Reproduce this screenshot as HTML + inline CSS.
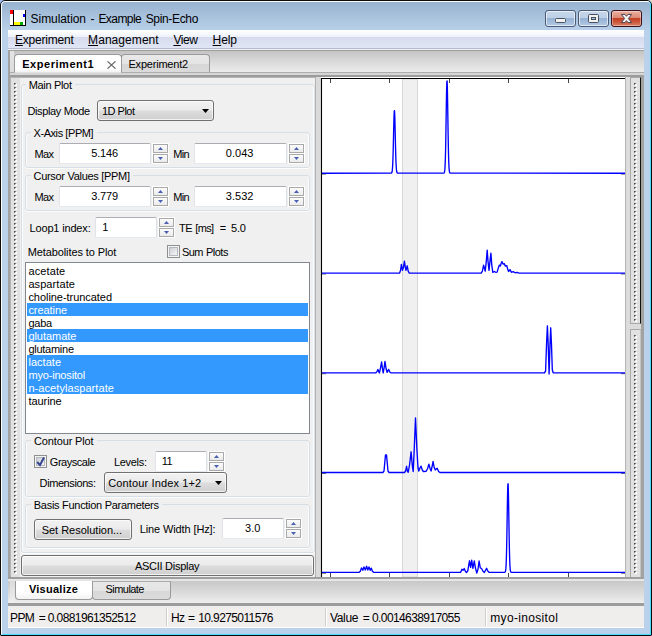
<!DOCTYPE html>
<html><head><meta charset="utf-8"><title>Simulation - Example Spin-Echo</title>
<style>
html,body{margin:0;padding:0;}
body{width:652px;height:636px;overflow:hidden;background:#fff;position:relative;font-family:"Liberation Sans",sans-serif;font-size:11px;}
div,span,svg{position:absolute;box-sizing:border-box;}
.t{white-space:nowrap;}
#win{left:0;top:0;width:652px;height:636px;border:1px solid #0c0c0c;border-radius:5px 5px 1px 1px;
 background:linear-gradient(180deg,#99b4d1 2px,#b9d1ea 30px);overflow:hidden;}
#inl{left:0;top:0;width:650px;height:634px;border:1px solid #fbfdff;border-right-color:#45dcff;border-bottom-color:#45dcff;border-radius:4px 4px 1px 1px;}
#fl{display:none;}
#frr{display:none;}
#client{left:8px;top:30px;width:636px;height:598px;background:#f0f0f0;}
#menubar{left:0;top:0;width:636px;height:20px;background:linear-gradient(180deg,#ffffff 0px,#f9fafd 3px,#eef1fa 7px,#d5daed 7px,#e1e6f6 18px,#b6bccf 18px,#b6bccf 19px,#f0f0f0 19px,#f0f0f0 20px);}
#tabbar{left:0;top:20px;width:636px;height:27px;background:linear-gradient(180deg,#a0a0a0 0px,#a0a0a0 1px,#c4c4c4 1px,#d6d6d6 10px,#ececec 22px,#adadad 22px,#adadad 23px,#d6d6d6 23px,#d6d6d6 25px,#9c9c9c 25px,#9c9c9c 27px);}
.cbn{top:10px;width:31px;height:17px;border:1px solid #4b5b75;border-radius:3px;background:linear-gradient(180deg,#c6d7eb 0px,#bdd0e7 7px,#97b1d3 7px,#9fb9d9 10px,#b3cae4 15px);box-shadow:inset 0 0 0 1px rgba(255,255,255,.62);}
.tab{border:1px solid #9a9a9a;border-bottom:none;border-radius:4px 4px 0 0;}
.gb{border:1px solid #d5dfe5;border-radius:3px;box-shadow:inset 1px 0 #fcfcfc,inset -1px 0 #fcfcfc,0 1px #fcfcfc;}
.tf{background:#fff;border:1px solid #abadb3;border-color:#abadb3 #dbdfe6 #e3e9ef #e2e3ea;border-radius:2px;}
.spw{background:#fff;}
.spb{border:1px solid #a9a9a9;background:linear-gradient(180deg,#fbfbfb,#ebebeb);}
.btn{border:1px solid #707070;border-radius:3px;background:linear-gradient(180deg,#f2f2f2 0%,#ebebeb 48%,#dddddd 52%,#cfcfcf 100%);box-shadow:inset 0 0 0 1px rgba(255,255,255,.7);}
.li{width:281px;height:13px;}
.lis{background:#3399ff;}
.cb{width:13px;height:13px;border:1px solid #8e8f8f;background:linear-gradient(135deg,#cdd1d6 20%,#f4f4f5 80%);box-shadow:inset 0 0 0 1px #f4f4f4,inset 0 0 0 2px #b4b9c0;}
</style></head><body>
<div style="left:0;top:0;width:5px;height:5px;background:#a3bff0;"></div><div style="left:647px;top:0;width:5px;height:5px;background:#d6d6d6;"></div>
<div id="win"><div id="inl"></div><div id="fl"></div><div id="frr"></div></div>

<svg style="left:10px;top:10px" width="16" height="16" viewBox="0 0 16 16" shape-rendering="crispEdges">
<rect x="0" y="0" width="16" height="16" fill="#fff"/>
<rect x="3" y="0" width="1" height="15" fill="#000"/><rect x="0" y="15" width="16" height="1" fill="#000"/><rect x="15" y="0" width="1" height="16" fill="#000"/>
<rect x="0" y="0" width="3" height="4" fill="#f00"/><rect x="13" y="4" width="2" height="3" fill="#00f"/>
<rect x="4" y="12" width="6" height="3" fill="#ff0"/><rect x="10" y="12" width="3" height="3" fill="#0a0"/></svg>
<span class="t" style="left:30.6px;top:12px;font-size:12px;line-height:14px;color:#000;letter-spacing:-0.067px;">Simulation</span><span class="t" style="left:90.5px;top:12px;font-size:12px;line-height:14px;color:#000;">-</span><span class="t" style="left:98.4px;top:12px;font-size:12px;line-height:14px;color:#000;letter-spacing:-0.548px;">Example</span><span class="t" style="left:145.7px;top:12px;font-size:12px;line-height:14px;color:#000;letter-spacing:-0.334px;">Spin-Echo</span>
<div class="cbn" style="left:545px;"></div><div class="cbn" style="left:578px;"></div>
<div class="cbn" style="left:611px;border-color:#3d0f18;background:linear-gradient(180deg,#ecb0a2 0px,#dc8a74 7px,#c23f25 7px,#c94f33 10px,#d97f63 15px);box-shadow:inset 0 0 0 1px rgba(255,255,255,.38);"></div>
<div style="left:555px;top:18px;width:11px;height:5px;background:#f1f1f1;border:1px solid #46505f;border-radius:1.5px;"></div>
<div style="left:588px;top:14px;width:11px;height:9px;background:#f1f1f1;border:1px solid #46505f;border-radius:1.5px;"></div>
<div style="left:591px;top:17px;width:5px;height:3px;background:#a9bfdb;border:1px solid #46505f;"></div>
<svg style="left:619px;top:12px" width="15" height="13" viewBox="0 0 15 13"><path d="M2.4,2.4 L6,2.4 L7.5,4.3 L9,2.4 L12.6,2.4 L9.4,6.5 L12.6,10.6 L9,10.6 L7.5,8.7 L6,10.6 L2.4,10.6 L5.6,6.5 Z" fill="#f4f4f4" stroke="#4a4450" stroke-width="1" stroke-linejoin="round"/></svg>

<div id="client"><div id="menubar"></div><div id="tabbar"></div></div>
<div style="left:8px;top:51px;width:2px;height:555px;background:#a2a2a2;"></div><div style="left:642px;top:75px;width:2px;height:531px;background:#a2a2a2;"></div>
<span class="t" style="left:15.0px;top:33px;font-size:12px;line-height:14px;color:#000;letter-spacing:-0.221px;"><u>E</u>xperiment</span>
<span class="t" style="left:88.1px;top:33px;font-size:12px;line-height:14px;color:#000;letter-spacing:0.060px;"><u>M</u>anagement</span>
<span class="t" style="left:173.4px;top:33px;font-size:12px;line-height:14px;color:#000;letter-spacing:-0.425px;"><u>V</u>iew</span>
<span class="t" style="left:212.6px;top:33px;font-size:12px;line-height:14px;color:#000;letter-spacing:-0.096px;"><u>H</u>elp</span>
<div style="left:10px;top:51px;width:4px;height:21px;background:linear-gradient(180deg,#e4e4e4,#dcdcdc);"></div>
<div class="tab" style="left:14px;top:54px;width:108px;height:18px;background:linear-gradient(180deg,#fff 0px,#fff 14px,#ececec 18px);"></div>
<div style="left:15px;top:72px;width:106px;height:1px;background:#e2e2e2;"></div>
<div class="tab" style="left:121px;top:54px;width:89px;height:18px;background:linear-gradient(180deg,#e9e9e9 0%,#e4e4e4 50%,#d6d6d6 52%,#dadada 100%);"></div>
<span class="t" style="left:22.2px;top:58px;font-size:11px;line-height:12px;color:#000;font-weight:bold;letter-spacing:0.544px;">Experiment1</span>
<span class="t" style="left:128.5px;top:58px;font-size:11px;line-height:12px;color:#000;letter-spacing:-0.215px;">Experiment2</span>
<svg style="left:107px;top:61px" width="9" height="8" viewBox="0 0 9 8"><path d="M0.5,0.4 L8.5,7.6 M8.5,0.4 L0.5,7.6" stroke="#666" stroke-width="1.25" fill="none"/></svg>
<div style="left:10px;top:77px;width:306px;height:500px;background:#b4b4b4;border-bottom:1px solid #a6a6a6;"></div>
<div style="left:11px;top:78px;width:304px;height:499px;background:#f0f0f0;"></div>
<div style="left:11px;top:78px;width:9px;height:499px;background:#e1e1e1;"></div>
<svg style="left:13px;top:83px" width="4" height="492"><defs><pattern id="gp" width="4" height="4" patternUnits="userSpaceOnUse"><rect x="1" y="0" width="1" height="1" fill="#4a4a4a"/><rect x="2" y="0" width="1" height="1" fill="#7c7c7c"/><rect x="1" y="1" width="1" height="1" fill="#7c7c7c"/><rect x="3" y="1" width="1" height="2" fill="#fff"/><rect x="2" y="2" width="1" height="1" fill="#fff"/></pattern></defs><rect width="4" height="492" fill="url(#gp)"/></svg>
<div style="left:316px;top:77px;width:5px;height:500px;background:#dadada;"></div>
<div class="gb" style="left:21px;top:84px;width:294px;height:469px;"></div><div style="left:25.7px;top:82px;width:49.3px;height:5px;background:#f0f0f0;"></div><span class="t" style="left:28.7px;top:79px;font-size:11px;line-height:12px;color:#000;letter-spacing:-0.322px;">Main Plot</span>
<div class="gb" style="left:25px;top:132px;width:285px;height:36px;"></div><div style="left:30.5px;top:130px;width:66.1px;height:5px;background:#f0f0f0;"></div><span class="t" style="left:33.5px;top:127px;font-size:11px;line-height:12px;color:#000;letter-spacing:-0.428px;">X-Axis [PPM]</span>
<div class="gb" style="left:25px;top:175px;width:285px;height:36px;"></div><div style="left:30.5px;top:173px;width:102.5px;height:5px;background:#f0f0f0;"></div><span class="t" style="left:33.5px;top:170px;font-size:11px;line-height:12px;color:#000;letter-spacing:-0.299px;">Cursor Values [PPM]</span>
<div class="gb" style="left:25px;top:440px;width:285px;height:57px;"></div><div style="left:31.0px;top:438px;width:65.6px;height:5px;background:#f0f0f0;"></div><span class="t" style="left:34.0px;top:435px;font-size:11px;line-height:12px;color:#000;letter-spacing:-0.139px;">Contour Plot</span>
<div class="gb" style="left:25px;top:504px;width:285px;height:44px;"></div><div style="left:30.8px;top:502px;width:131.2px;height:5px;background:#f0f0f0;"></div><span class="t" style="left:33.8px;top:499px;font-size:11px;line-height:12px;color:#000;letter-spacing:-0.286px;">Basis Function Parameters</span>
<span class="t" style="left:27.4px;top:105px;font-size:11px;line-height:12px;color:#000;letter-spacing:-0.348px;">Display Mode</span>
<div class="btn" style="left:97px;top:100px;width:117px;height:21px;"></div>
<span class="t" style="left:102.0px;top:105px;font-size:11px;line-height:12px;color:#000;letter-spacing:-0.510px;">1D Plot</span>
<svg style="left:202px;top:109px" width="7" height="4"><path d="M0,0 L7,0 L3.5,4 Z" fill="#000"/></svg>
<span class="t" style="left:34.5px;top:148px;font-size:11px;line-height:12px;color:#000;letter-spacing:-0.600px;">Max</span><div class="tf" style="left:59px;top:143px;width:92px;height:21px;"></div><span class="t" style="left:91.3px;top:147px;font-size:11px;line-height:12px;color:#000;letter-spacing:-0.200px;">5.146</span><div class="spw" style="left:152px;top:143px;width:17px;height:21px;"></div><div class="spb" style="left:153px;top:144px;width:15px;height:9px;"></div><div class="spb" style="left:153px;top:154px;width:15px;height:9px;"></div><svg style="left:158px;top:147px" width="5" height="3"><path d="M0,3 L2.5,0 L5,3 Z" fill="#4a5fb0"/></svg><svg style="left:158px;top:157px" width="5" height="3"><path d="M0,0 L5,0 L2.5,3 Z" fill="#4a5fb0"/></svg><span class="t" style="left:173.2px;top:148px;font-size:11px;line-height:12px;color:#000;letter-spacing:-0.600px;">Min</span><div class="tf" style="left:194px;top:143px;width:93px;height:21px;"></div><span class="t" style="left:225.8px;top:147px;font-size:11px;line-height:12px;color:#000;letter-spacing:0.025px;">0.043</span><div class="spw" style="left:288px;top:143px;width:17px;height:21px;"></div><div class="spb" style="left:289px;top:144px;width:15px;height:9px;"></div><div class="spb" style="left:289px;top:154px;width:15px;height:9px;"></div><svg style="left:294px;top:147px" width="5" height="3"><path d="M0,3 L2.5,0 L5,3 Z" fill="#4a5fb0"/></svg><svg style="left:294px;top:157px" width="5" height="3"><path d="M0,0 L5,0 L2.5,3 Z" fill="#4a5fb0"/></svg>
<span class="t" style="left:34.5px;top:191px;font-size:11px;line-height:12px;color:#000;letter-spacing:-0.600px;">Max</span><div class="tf" style="left:59px;top:186px;width:92px;height:21px;"></div><span class="t" style="left:91.3px;top:190px;font-size:11px;line-height:12px;color:#000;letter-spacing:-0.200px;">3.779</span><div class="spw" style="left:152px;top:186px;width:17px;height:21px;"></div><div class="spb" style="left:153px;top:187px;width:15px;height:9px;"></div><div class="spb" style="left:153px;top:197px;width:15px;height:9px;"></div><svg style="left:158px;top:190px" width="5" height="3"><path d="M0,3 L2.5,0 L5,3 Z" fill="#4a5fb0"/></svg><svg style="left:158px;top:200px" width="5" height="3"><path d="M0,0 L5,0 L2.5,3 Z" fill="#4a5fb0"/></svg><span class="t" style="left:173.2px;top:191px;font-size:11px;line-height:12px;color:#000;letter-spacing:-0.600px;">Min</span><div class="tf" style="left:194px;top:186px;width:93px;height:21px;"></div><span class="t" style="left:225.8px;top:190px;font-size:11px;line-height:12px;color:#000;letter-spacing:0.025px;">3.532</span><div class="spw" style="left:288px;top:186px;width:17px;height:21px;"></div><div class="spb" style="left:289px;top:187px;width:15px;height:9px;"></div><div class="spb" style="left:289px;top:197px;width:15px;height:9px;"></div><svg style="left:294px;top:190px" width="5" height="3"><path d="M0,3 L2.5,0 L5,3 Z" fill="#4a5fb0"/></svg><svg style="left:294px;top:200px" width="5" height="3"><path d="M0,0 L5,0 L2.5,3 Z" fill="#4a5fb0"/></svg>
<span class="t" style="left:29.6px;top:222px;font-size:11px;line-height:12px;color:#000;letter-spacing:-0.173px;">Loop1 index:</span>
<div class="tf" style="left:95px;top:217px;width:62px;height:21px;"></div>
<span class="t" style="left:102.3px;top:221px;font-size:11px;line-height:12px;color:#000;">1</span>
<div class="spw" style="left:158px;top:217px;width:17px;height:21px;"></div><div class="spb" style="left:159px;top:218px;width:15px;height:9px;"></div><div class="spb" style="left:159px;top:228px;width:15px;height:9px;"></div><svg style="left:164px;top:221px" width="5" height="3"><path d="M0,3 L2.5,0 L5,3 Z" fill="#4a5fb0"/></svg><svg style="left:164px;top:231px" width="5" height="3"><path d="M0,0 L5,0 L2.5,3 Z" fill="#4a5fb0"/></svg>
<span class="t" style="left:179.1px;top:222px;font-size:11px;line-height:12px;color:#000;letter-spacing:-0.600px;">TE</span><span class="t" style="left:195.2px;top:222px;font-size:11px;line-height:12px;color:#000;letter-spacing:-0.600px;">[ms]</span><span class="t" style="left:219.8px;top:222px;font-size:11px;line-height:12px;color:#000;">=</span><span class="t" style="left:231.0px;top:222px;font-size:11px;line-height:12px;color:#000;letter-spacing:-0.206px;">5.0</span>
<span class="t" style="left:27.7px;top:246px;font-size:11px;line-height:12px;color:#000;letter-spacing:-0.100px;">Metabolites to Plot</span>
<div class="cb" style="left:167px;top:245px;"></div>
<span class="t" style="left:181.9px;top:246px;font-size:11px;line-height:12px;color:#000;letter-spacing:-0.600px;">Sum</span><span class="t" style="left:206.0px;top:246px;font-size:11px;line-height:12px;color:#000;letter-spacing:-0.509px;">Plots</span>
<div style="left:25px;top:262px;width:285px;height:172px;background:#fff;border:1px solid #828790;"></div>
<span class="t" style="left:28.4px;top:265px;font-size:11px;line-height:12px;color:#000;letter-spacing:0.123px;">acetate</span>
<span class="t" style="left:28.4px;top:278px;font-size:11px;line-height:12px;color:#000;letter-spacing:0.078px;">aspartate</span>
<span class="t" style="left:28.4px;top:291px;font-size:11px;line-height:12px;color:#000;letter-spacing:-0.048px;">choline-truncated</span>
<div class="li lis" style="left:27px;top:303px;"></div>
<span class="t" style="left:28.4px;top:304px;font-size:11px;line-height:12px;color:#fff;letter-spacing:-0.046px;">creatine</span>
<span class="t" style="left:28.4px;top:317px;font-size:11px;line-height:12px;color:#000;letter-spacing:-0.233px;">gaba</span>
<div class="li lis" style="left:27px;top:329px;"></div>
<span class="t" style="left:28.4px;top:330px;font-size:11px;line-height:12px;color:#fff;letter-spacing:-0.039px;">glutamate</span>
<span class="t" style="left:28.4px;top:343px;font-size:11px;line-height:12px;color:#000;letter-spacing:-0.261px;">glutamine</span>
<div class="li lis" style="left:27px;top:355px;"></div>
<span class="t" style="left:28.4px;top:356px;font-size:11px;line-height:12px;color:#fff;letter-spacing:0.044px;">lactate</span>
<div class="li lis" style="left:27px;top:368px;"></div>
<span class="t" style="left:28.4px;top:369px;font-size:11px;line-height:12px;color:#fff;letter-spacing:-0.172px;">myo-inositol</span>
<div class="li lis" style="left:27px;top:381px;"></div>
<span class="t" style="left:28.4px;top:382px;font-size:11px;line-height:12px;color:#fff;letter-spacing:0.070px;">n-acetylaspartate</span>
<span class="t" style="left:28.4px;top:395px;font-size:11px;line-height:12px;color:#000;letter-spacing:-0.054px;">taurine</span>
<div class="cb" style="left:34px;top:455px;"></div>
<svg style="left:35px;top:456px" width="11" height="11"><path d="M2.2,6.0 L5,9.0 L9,1.6" stroke="#36458f" stroke-width="2" fill="none"/></svg>
<span class="t" style="left:49.8px;top:456px;font-size:11px;line-height:12px;color:#000;letter-spacing:-0.475px;">Grayscale</span>
<span class="t" style="left:113.9px;top:456px;font-size:11px;line-height:12px;color:#000;letter-spacing:-0.296px;">Levels:</span>
<div class="tf" style="left:155px;top:451px;width:52px;height:21px;"></div>
<span class="t" style="left:161.7px;top:455px;font-size:11px;line-height:12px;color:#000;letter-spacing:-0.438px;">11</span>
<div class="spw" style="left:208px;top:451px;width:17px;height:21px;"></div><div class="spb" style="left:209px;top:452px;width:15px;height:9px;"></div><div class="spb" style="left:209px;top:462px;width:15px;height:9px;"></div><svg style="left:214px;top:455px" width="5" height="3"><path d="M0,3 L2.5,0 L5,3 Z" fill="#4a5fb0"/></svg><svg style="left:214px;top:465px" width="5" height="3"><path d="M0,0 L5,0 L2.5,3 Z" fill="#4a5fb0"/></svg>
<span class="t" style="left:39.6px;top:477px;font-size:11px;line-height:12px;color:#000;letter-spacing:-0.410px;">Dimensions:</span>
<div class="btn" style="left:104px;top:472px;width:123px;height:21px;"></div>
<span class="t" style="left:108.3px;top:477px;font-size:11px;line-height:12px;color:#000;letter-spacing:0.124px;">Contour Index 1+2</span>
<svg style="left:215px;top:481px" width="7" height="4"><path d="M0,0 L7,0 L3.5,4 Z" fill="#000"/></svg>
<div class="btn" style="left:34px;top:519px;width:98px;height:21px;"></div>
<span class="t" style="left:41.7px;top:524px;font-size:11px;line-height:12px;color:#000;letter-spacing:-0.016px;">Set Resolution...</span>
<span class="t" style="left:139.7px;top:523px;font-size:11px;line-height:12px;color:#000;letter-spacing:-0.115px;">Line Width [Hz]:</span>
<div class="tf" style="left:222px;top:518px;width:62px;height:21px;"></div>
<span class="t" style="left:245.0px;top:522px;font-size:11px;line-height:12px;color:#000;letter-spacing:0.044px;">3.0</span>
<div class="spw" style="left:285px;top:518px;width:17px;height:21px;"></div><div class="spb" style="left:286px;top:519px;width:15px;height:9px;"></div><div class="spb" style="left:286px;top:529px;width:15px;height:9px;"></div><svg style="left:291px;top:522px" width="5" height="3"><path d="M0,3 L2.5,0 L5,3 Z" fill="#4a5fb0"/></svg><svg style="left:291px;top:532px" width="5" height="3"><path d="M0,0 L5,0 L2.5,3 Z" fill="#4a5fb0"/></svg>
<div class="btn" style="left:21px;top:555px;width:293px;height:21px;"></div>
<span class="t" style="left:135.0px;top:560px;font-size:11px;line-height:12px;color:#000;letter-spacing:-0.281px;">ASCII Display</span>
<div style="left:321px;top:77px;width:305px;height:501px;background:#fff;"></div>
<svg style="left:0;top:0" width="652" height="636" viewBox="0 0 652 636">
<rect x="402.5" y="79" width="15" height="498" fill="#f0f0f0" stroke="#d6d6d6" stroke-width="1"/>
<path d="M321.5,577 V78.5 H625" fill="none" stroke="#000" stroke-width="1.1"/>
<path d="M330.5,79 V83 M330.5,573 V577 M389.5,79 V83 M389.5,573 V577 M449.5,79 V83 M449.5,573 V577 M508.5,79 V83 M508.5,573 V577 M568.5,79 V83 M568.5,573 V577" stroke="#484848" stroke-width="1" fill="none"/>
<path d="M322,174.1 H326 M621,174.1 H625 M322,274.0 H326 M621,274.0 H625 M322,373.7 H326 M621,373.7 H625 M322,473.4 H326 M621,473.4 H625 M322,573.2 H326 M621,573.2 H625" stroke="#505050" stroke-width="0.9" fill="none"/>
<path d="M322.00,173.20 L391.00,173.18 L391.25,173.13 L391.50,173.01 L391.75,172.71 L392.00,172.03 L392.25,170.63 L392.50,168.02 L392.75,163.63 L393.00,156.97 L393.25,147.97 L393.50,137.23 L393.75,126.17 L394.00,116.80 L394.25,111.17 L394.50,110.63 L394.75,115.32 L395.00,124.09 L395.25,134.99 L395.50,145.93 L395.75,155.35 L396.00,162.49 L396.25,167.30 L396.50,170.22 L396.75,171.82 L397.00,172.61 L397.25,172.97 L397.50,173.12 L397.75,173.17 L443.60,173.17 L443.85,173.10 L444.10,172.92 L444.35,172.48 L444.60,171.47 L444.85,169.41 L445.10,165.55 L445.35,159.07 L445.60,149.24 L445.85,135.96 L446.10,120.11 L446.35,103.78 L446.60,89.95 L446.85,81.64 L447.10,80.84 L447.35,87.76 L447.60,100.71 L447.85,116.79 L448.10,132.95 L448.35,146.85 L448.60,157.38 L448.85,164.49 L449.10,168.80 L449.35,171.16 L449.60,172.34 L449.85,172.86 L450.10,173.08 L450.35,173.16 L626.00,173.20" fill="none" stroke="#0000ff" stroke-width="1.35" stroke-linejoin="round"/>
<path d="M322.00,273.10 L399.60,273.10 L400.50,270.60 L401.40,264.40 L402.50,270.40 L403.50,267.10 L404.40,261.10 L405.30,267.10 L406.00,270.40 L407.20,265.80 L408.20,271.10 L409.30,273.10 L481.20,273.10 L482.40,271.10 L483.60,265.10 L485.20,271.10 L486.30,261.10 L487.20,250.10 L488.00,261.10 L489.00,270.40 L490.00,261.10 L490.90,253.10 L491.80,265.10 L492.80,272.30 L494.40,271.50 L495.60,272.30 L497.10,272.10 L498.30,268.10 L499.40,265.10 L500.40,266.10 L501.20,263.10 L502.00,261.60 L503.00,264.10 L504.20,263.60 L505.40,266.10 L506.80,265.60 L507.80,269.60 L508.60,271.50 L510.00,269.60 L511.40,272.30 L513.20,271.60 L515.00,272.80 L517.00,272.30 L519.00,273.10 L626.00,273.10" fill="none" stroke="#0000ff" stroke-width="1.35" stroke-linejoin="round"/>
<path d="M322.00,372.80 L375.90,372.80 L377.00,371.60 L377.90,369.40 L378.70,371.60 L379.40,373.00 L380.50,367.80 L381.60,362.00 L382.50,368.80 L383.20,373.00 L384.10,367.80 L385.00,361.40 L386.10,368.80 L387.10,372.40 L388.70,369.40 L389.80,372.00 L390.80,372.80 L544.50,372.80 L545.60,370.80 L546.60,342.80 L547.40,325.80 L548.20,344.80 L549.10,374.00 L550.00,344.80 L550.70,327.80 L551.50,344.80 L552.30,369.80 L553.20,372.80 L626.00,372.80" fill="none" stroke="#0000ff" stroke-width="1.35" stroke-linejoin="round"/>
<path d="M322.00,472.50 L382.90,472.50 L384.00,471.00 L385.50,454.90 L386.50,454.90 L388.00,471.00 L389.10,472.50 L404.50,472.50 L405.60,471.00 L406.60,466.30 L407.40,471.00 L408.20,472.30 L409.60,464.50 L411.10,451.80 L412.40,466.50 L413.20,471.50 L414.30,447.50 L415.50,417.90 L416.80,447.50 L418.00,467.50 L418.80,471.00 L420.00,468.00 L421.00,466.10 L422.30,470.00 L423.40,471.50 L426.20,471.30 L427.60,468.50 L428.90,464.10 L430.20,469.00 L431.10,471.00 L432.20,466.00 L433.10,461.50 L434.20,467.50 L435.30,470.00 L436.30,468.90 L437.20,468.30 L438.60,471.50 L439.90,472.50 L626.00,472.50" fill="none" stroke="#0000ff" stroke-width="1.35" stroke-linejoin="round"/>
<path d="M322.00,572.30 L359.20,572.30 L360.30,571.30 L361.50,567.90 L362.80,570.30 L364.00,567.00 L365.30,570.00 L366.60,566.30 L367.80,570.00 L369.00,567.00 L370.20,570.30 L371.30,568.10 L372.40,571.30 L373.50,572.30 L460.50,572.30 L461.20,571.10 L461.90,569.30 L463.00,570.30 L464.20,568.50 L465.40,571.30 L466.50,572.50 L467.80,570.80 L468.70,565.30 L469.50,560.80 L470.60,567.30 L471.70,560.10 L472.90,568.30 L474.30,561.00 L475.50,568.30 L476.80,573.10 L478.00,569.30 L479.10,561.00 L480.30,567.80 L481.70,568.80 L483.00,571.30 L484.30,572.50 L485.60,570.10 L486.60,568.30 L487.80,571.10 L489.00,572.30 L504.60,572.27 L504.85,572.21 L505.10,572.04 L505.35,571.61 L505.60,570.64 L505.85,568.66 L506.10,564.96 L506.35,558.73 L506.60,549.30 L506.85,536.54 L507.10,521.32 L507.35,505.64 L507.60,492.36 L507.85,484.38 L508.10,483.62 L508.35,490.26 L508.60,502.69 L508.85,518.14 L509.10,533.65 L509.35,547.00 L509.60,557.11 L509.85,563.94 L510.10,568.08 L510.35,570.35 L510.60,571.47 L510.85,571.98 L511.10,572.18 L511.35,572.26 L626.00,572.30" fill="none" stroke="#0000ff" stroke-width="1.35" stroke-linejoin="round"/>
</svg>
<div style="left:625px;top:77px;width:1px;height:500px;background:#b4b4b4;"></div>
<div style="left:626px;top:77px;width:15px;height:500px;background:#dcdcdc;"></div>
<div style="left:630px;top:77px;width:11px;height:247px;background:#e1e1e1;border:1px solid #a8a8a8;border-right-color:#101010;"></div>
<div style="left:630px;top:329px;width:11px;height:248px;background:#e1e1e1;border:1px solid #a8a8a8;border-right-color:#c4c4c4;border-bottom:none;"></div>
<svg style="left:633px;top:83px" width="4" height="240"><rect width="4" height="240" fill="url(#gp)"/></svg>
<svg style="left:633px;top:335px" width="4" height="240"><rect width="4" height="240" fill="url(#gp)"/></svg>
<div style="left:641px;top:77px;width:1px;height:500px;background:#a2a2a2;"></div>
<div style="left:8px;top:577px;width:636px;height:29px;background:linear-gradient(180deg,#9e9e9e 0px,#9e9e9e 2px,#e6e6e6 2px,#e6e6e6 4px,#c8c8c8 4px,#d6d6d6 13px,#eeeeee 26px,#9c9c9c 26px,#9c9c9c 29px);"></div>
<div style="left:10px;top:581px;width:5px;height:22px;background:linear-gradient(180deg,#dadada,#f0f0f0);"></div>
<div style="left:15px;top:581px;width:78px;height:19px;border:1px solid #9a9a9a;border-top:none;border-radius:0 0 4px 4px;background:linear-gradient(180deg,#fff 60%,#f2f2f2);"></div>
<div style="left:92px;top:581px;width:79px;height:19px;border:1px solid #9a9a9a;border-top-color:#ababab;border-radius:0 0 4px 4px;background:linear-gradient(180deg,#e8e8e8 0%,#e4e4e4 50%,#d8d8d8 53%,#dcdcdc 100%);"></div>
<span class="t" style="left:28.9px;top:583px;font-size:11px;line-height:12px;color:#000;font-weight:bold;letter-spacing:0.266px;">Visualize</span>
<span class="t" style="left:105.5px;top:583px;font-size:11px;line-height:12px;color:#000;letter-spacing:-0.545px;">Simulate</span>
<div style="left:8px;top:606px;width:636px;height:22px;background:#f0eded;border-bottom:1px solid #fff;"></div>
<div style="left:165.5px;top:608px;width:2px;height:18px;background:linear-gradient(90deg,#d2cdcd 50%,#fff 50%);"></div>
<div style="left:324.5px;top:608px;width:2px;height:18px;background:linear-gradient(90deg,#d2cdcd 50%,#fff 50%);"></div>
<div style="left:485px;top:608px;width:2px;height:18px;background:linear-gradient(90deg,#d2cdcd 50%,#fff 50%);"></div>
<span class="t" style="left:10.0px;top:611px;font-size:12px;line-height:14px;color:#000;letter-spacing:-0.600px;">PPM</span><span class="t" style="left:38.7px;top:611px;font-size:12px;line-height:14px;color:#000;">=</span><span class="t" style="left:47.8px;top:611px;font-size:12px;line-height:14px;color:#000;letter-spacing:-0.600px;">0.0881961352512</span>
<span class="t" style="left:171.0px;top:611px;font-size:12px;line-height:14px;color:#000;letter-spacing:-0.600px;">Hz</span><span class="t" style="left:188.1px;top:611px;font-size:12px;line-height:14px;color:#000;">=</span><span class="t" style="left:198.2px;top:611px;font-size:12px;line-height:14px;color:#000;letter-spacing:-0.600px;">10.9275011576</span>
<span class="t" style="left:330.0px;top:611px;font-size:12px;line-height:14px;color:#000;letter-spacing:-0.353px;">Value</span><span class="t" style="left:362.7px;top:611px;font-size:12px;line-height:14px;color:#000;">=</span><span class="t" style="left:372.0px;top:611px;font-size:12px;line-height:14px;color:#000;letter-spacing:-0.600px;">0.0014638917055</span>
<span class="t" style="left:490.3px;top:611px;font-size:12px;line-height:14px;color:#000;letter-spacing:0.318px;">myo-inositol</span>
</body></html>
